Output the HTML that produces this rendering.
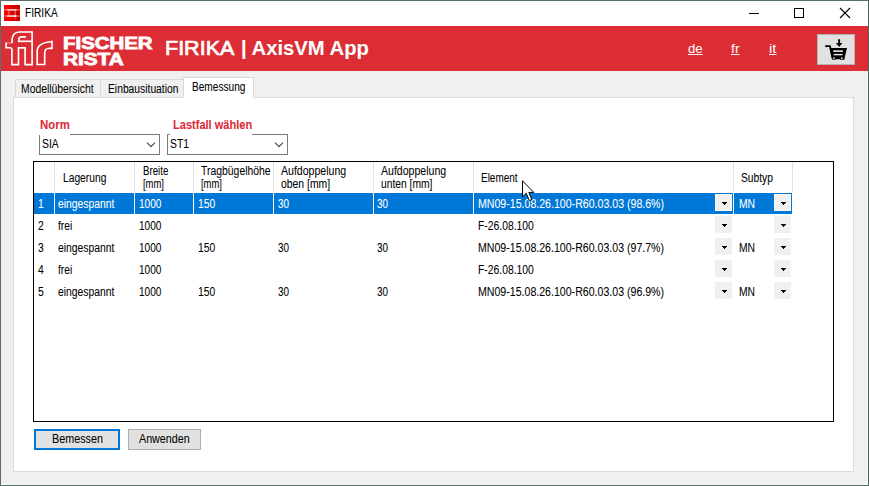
<!DOCTYPE html>
<html><head><meta charset="utf-8">
<style>
*{box-sizing:border-box;margin:0;padding:0}
html,body{width:869px;height:486px;overflow:hidden;background:#f0f0f0;font-family:"Liberation Sans",sans-serif;font-size:11px;color:#000}
.abs{position:absolute}
.t{position:absolute;white-space:nowrap;transform-origin:0 0;-webkit-text-stroke:.06px currentColor}
#win{position:absolute;left:0;top:0;width:869px;height:486px;background:#f0f0f0;overflow:hidden}
#bT{left:0;top:0;width:869px;height:1px;background:#5a7168}
#bL{left:0;top:0;width:1px;height:486px;background:#5a7168}
#bR{left:868px;top:0;width:1px;height:486px;background:#4c645b}
#bRW{left:867px;top:71px;width:1px;height:414px;background:#f9f9f9}
#bB{left:0;top:485px;width:869px;height:1px;background:#566d65}
#bW{left:1px;top:484px;width:867px;height:1px;background:#fafafa}
#title{left:1px;top:1px;width:867px;height:25px;background:#fff}
#banner{left:1px;top:26px;width:867px;height:45px;background:#dc2d35}
.tab{position:absolute;border:1px solid #d9d9d9;border-bottom:none;background:#f0f0f0}
#panel{left:13px;top:97px;width:841px;height:375px;background:#fff;border:1px solid #dcdcdc}
.combo{position:absolute;height:21px;border:1px solid #7a7a7a;background:#fff}
.lbl{position:absolute;background:#fff}
#grid{left:33px;top:161px;width:801px;height:261px;border:1px solid #000;background:#fff}
.hd{position:absolute;top:162px;width:1px;height:31px;background:#e2e2e2}
.sel{position:absolute;left:34px;top:193px;width:758px;height:21px;background:#0078d7}
.vd{position:absolute;top:193px;width:1px;height:21px;background:#fff}
.dd{position:absolute;width:17px;height:17px;background:linear-gradient(#000,#000) 7px 8px/5px 1px no-repeat,linear-gradient(#000,#000) 8px 9px/3px 1px no-repeat,linear-gradient(#000,#000) 9px 10px/1px 1px no-repeat,#f0f0f0}
.dds{box-shadow:inset 0 0 0 1px #fcf7f1}
.btn{position:absolute;height:21px;background:#e1e1e1;border:1px solid #adadad}
</style></head><body>
<div id="win">
<div class="abs" id="title"></div>
<div class="abs" id="banner"></div>

<svg class="abs" style="left:4px;top:5px" width="16" height="16" viewBox="0 0 16 16">
<defs><linearGradient id="g" x1="0" x2="1" y1="0" y2="0"><stop offset="0" stop-color="#ff0000"/><stop offset="1" stop-color="#c40000"/></linearGradient></defs>
<rect width="16" height="16" fill="url(#g)"/>
<rect x="0" y="4.2" width="16" height="1.3" fill="#fff" opacity=".4"/>
<rect x="0" y="10.4" width="16" height="1.3" fill="#fff" opacity=".4"/>
<rect x="3" y="4.2" width="9.6" height="1.3" fill="#fff" opacity=".8"/>
<rect x="3" y="10.4" width="9.6" height="1.3" fill="#fff" opacity=".85"/>
<rect x="4.3" y="5.4" width="1.2" height="5" fill="#fff" opacity=".4"/>
<rect x="10.6" y="5.4" width="1.2" height="5" fill="#fff" opacity=".4"/>
<rect x="10.3" y="10.3" width="1.5" height="1.6" fill="#fff"/>
<rect x="10.5" y="13" width="1.2" height=".8" fill="#fff" opacity=".6"/>
</svg>
<div class="t" style="left:25.30px;top:6.00px;font-size:12px;line-height:14px;transform:scale(0.8440,1.000);">FIRIKA</div>
<svg class="abs" style="left:740px;top:1px" width="128" height="25" viewBox="740 1 128 25" shape-rendering="crispEdges">
<rect x="749" y="13" width="10" height="1" fill="#000"/>
<rect x="794.5" y="8.5" width="9" height="9" fill="none" stroke="#000" stroke-width="1"/>
<g shape-rendering="auto" stroke="#000" stroke-width="1.1"><line x1="840" y1="8" x2="850" y2="18"/><line x1="850" y1="8" x2="840" y2="18"/></g>
</svg>
<svg class="abs" style="left:0;top:26px" width="60" height="45" viewBox="0 26 60 45" fill="none" stroke="#fff" stroke-width="1.65" stroke-linejoin="miter">
<path d="M6.1 42.6 V47.7 H10.6 L11.9 49 V64.6 H18.5 V47.9 H25.1 V64.6 H32.1 V32 H19.2 C14.6 32 12.1 35.4 12.1 39.6 V42.9"/>
<path d="M6.1 42.9 H12.1" opacity=".35"/>
<path d="M18.7 41.3 V40.2 C18.7 38.2 19.8 36.9 21.8 36.9 H25.9"/>
<path d="M18 41.3 H32"/>
<path d="M37.2 64.5 V51 C37.2 45.6 42.5 42.4 52 41.5 V48.3 H49.2 C46.2 48.4 44.7 50 44.7 53 V64.5 Z"/>
</svg>
<div class="t" style="left:62.90px;top:34.90px;font-size:16px;line-height:17px;font-weight:bold;color:#fff;transform:scale(1.2754,1.000);-webkit-text-stroke:.8px #fff;">FISCHER</div>
<div class="t" style="left:62.90px;top:51.30px;font-size:16px;line-height:17px;font-weight:bold;color:#fff;transform:scale(1.2971,1.000);-webkit-text-stroke:.8px #fff;">RISTA</div>
<div class="t" style="left:165.40px;top:36.50px;font-size:20px;line-height:22px;color:#fff;transform:scale(1.0760,1.000);-webkit-text-stroke:.7px #fff;">FIRIKA</div>
<div class="t" style="left:241.20px;top:36.50px;font-size:20px;line-height:22px;font-weight:bold;color:#fff;transform:scale(1.0129,1.000);">| AxisVM App</div>
<div class="t" style="left:688.00px;top:41.00px;font-size:13px;line-height:15px;color:#fff;transform:scale(1.0069,1.000);text-decoration:underline;-webkit-text-stroke:0;">de</div>
<div class="t" style="left:731.20px;top:41.00px;font-size:13px;line-height:15px;color:#fff;transform:scale(1.0750,1.000);text-decoration:underline;-webkit-text-stroke:0;">fr</div>
<div class="t" style="left:769.00px;top:41.00px;font-size:13px;line-height:15px;color:#fff;transform:scale(1.1538,1.000);text-decoration:underline;-webkit-text-stroke:0;">it</div>
<div class="abs" style="left:817px;top:34px;width:38px;height:31px;background:#e1e1e1;border:1px solid #b4b4b4"></div>
<svg class="abs" style="left:817px;top:34px" width="38" height="31" viewBox="817 34 38 31">
<path d="M838.2 39.2 H840.1 V43.1 H842.4 L839.15 47 L835.9 43.1 H838.2 Z" fill="#000"/>
<path d="M829.5 47.9 H847 L844.7 57.4 V58.5 A1.3 1.3 0 0 1 843.4 59.8 H840.6 L839.8 59.2 H836 L835.2 59.8 H833 A1.3 1.3 0 0 1 831.7 58.5 Z" fill="#000"/>
<path d="M825.6 46.2 H830 L832.4 57" fill="none" stroke="#000" stroke-width="1.7"/>
<path d="M824.8 46.2 L826.6 45 V47.4 Z" fill="#000"/>
<rect x="833.2" y="50.3" width="9.7" height="1.6" fill="#e6e6e6"/>
<rect x="833.6" y="53.9" width="8.9" height="1.4" fill="#e6e6e6"/>
<circle cx="834" cy="58.2" r=".85" fill="#e6e6e6"/><circle cx="841.8" cy="58.2" r=".85" fill="#e6e6e6"/>
</svg>
<div class="abs" id="panel"></div>
<div class="tab" style="left:15px;top:79px;width:86px;height:18px"></div>
<div class="tab" style="left:100px;top:79px;width:84px;height:18px"></div>
<div class="tab" style="left:183px;top:77px;width:71px;height:21px;background:#fff"></div>
<div class="t" style="left:21.30px;top:82.00px;font-size:12px;line-height:14px;transform:scale(0.8643,1.000);">Modellübersicht</div>
<div class="t" style="left:107.60px;top:82.00px;font-size:12px;line-height:14px;transform:scale(0.8585,1.000);">Einbausituation</div>
<div class="t" style="left:191.50px;top:80.00px;font-size:12px;line-height:14px;transform:scale(0.8426,1.000);">Bemessung</div>
<div class="combo" style="left:39px;top:134px;width:121px"></div>
<div class="combo" style="left:167px;top:134px;width:121px"></div>
<div class="lbl" style="left:36px;top:119px;width:34px;height:16px"></div>
<div class="lbl" style="left:170px;top:119px;width:82px;height:16px"></div>
<div class="t" style="left:39.80px;top:118.00px;font-size:12px;line-height:14px;font-weight:bold;color:#dc2b3a;transform:scale(0.9498,1.000);">Norm</div>
<div class="t" style="left:172.60px;top:118.00px;font-size:12px;line-height:14px;font-weight:bold;color:#dc2b3a;transform:scale(0.9209,1.000);">Lastfall wählen</div>
<div class="t" style="left:42.30px;top:136.50px;font-size:12px;line-height:14px;transform:scale(0.8620,1.000);">SIA</div>
<div class="t" style="left:170.40px;top:136.50px;font-size:12px;line-height:14px;transform:scale(0.8620,1.000);">ST1</div>
<svg class="abs" style="left:146px;top:141px" width="10" height="7" viewBox="0 0 10 7" fill="none" stroke="#444" stroke-width="1.1"><path d="M1 1.7 L5 5.7 L9 1.7"/></svg>
<svg class="abs" style="left:274.3px;top:141px" width="10" height="7" viewBox="0 0 10 7" fill="none" stroke="#444" stroke-width="1.1"><path d="M1 1.7 L5 5.7 L9 1.7"/></svg>
<div class="abs" id="grid"></div>
<div class="hd" style="left:54px"></div>
<div class="hd" style="left:134px"></div>
<div class="hd" style="left:193px"></div>
<div class="hd" style="left:273px"></div>
<div class="hd" style="left:373px"></div>
<div class="hd" style="left:473px"></div>
<div class="hd" style="left:733px"></div>
<div class="hd" style="left:792px"></div>
<div class="t" style="left:62.70px;top:171.00px;font-size:12px;line-height:14px;transform:scale(0.8552,1.000);">Lagerung</div>
<div class="t" style="left:142.70px;top:164.00px;font-size:12px;line-height:14px;transform:scale(0.8064,1.000);">Breite</div>
<div class="t" style="left:142.70px;top:177.00px;font-size:12px;line-height:14px;transform:scale(0.7850,1.000);">[mm]</div>
<div class="t" style="left:201.40px;top:164.00px;font-size:12px;line-height:14px;transform:scale(0.8673,1.000);">Tragbügelhöhe</div>
<div class="t" style="left:201.40px;top:177.00px;font-size:12px;line-height:14px;transform:scale(0.7850,1.000);">[mm]</div>
<div class="t" style="left:281.10px;top:164.00px;font-size:12px;line-height:14px;transform:scale(0.8796,1.000);">Aufdoppelung</div>
<div class="t" style="left:281.10px;top:177.00px;font-size:12px;line-height:14px;transform:scale(0.8670,1.000);">oben [mm]</div>
<div class="t" style="left:380.70px;top:164.00px;font-size:12px;line-height:14px;transform:scale(0.8796,1.000);">Aufdoppelung</div>
<div class="t" style="left:380.70px;top:177.00px;font-size:12px;line-height:14px;transform:scale(0.8567,1.000);">unten [mm]</div>
<div class="t" style="left:481.20px;top:171.00px;font-size:12px;line-height:14px;transform:scale(0.8295,1.000);">Element</div>
<div class="t" style="left:741.20px;top:171.00px;font-size:12px;line-height:14px;transform:scale(0.8530,1.000);">Subtyp</div>
<div class="sel"></div>
<div class="vd" style="left:54px"></div>
<div class="vd" style="left:134px"></div>
<div class="vd" style="left:193px"></div>
<div class="vd" style="left:273px"></div>
<div class="vd" style="left:373px"></div>
<div class="vd" style="left:473px"></div>
<div class="vd" style="left:733px"></div>
<div class="t" style="left:37.90px;top:196.50px;font-size:12px;line-height:14px;color:#fff;transform:scale(0.8620,1.000);">1</div>
<div class="t" style="left:57.80px;top:196.50px;font-size:12px;line-height:14px;color:#fff;transform:scale(0.8627,1.000);">eingespannt</div>
<div class="t" style="left:138.80px;top:196.50px;font-size:12px;line-height:14px;color:#fff;transform:scale(0.8411,1.000);">1000</div>
<div class="t" style="left:198.20px;top:196.50px;font-size:12px;line-height:14px;color:#fff;transform:scale(0.8600,1.000);">150</div>
<div class="t" style="left:277.90px;top:196.50px;font-size:12px;line-height:14px;color:#fff;transform:scale(0.8299,1.000);">30</div>
<div class="t" style="left:377.30px;top:196.50px;font-size:12px;line-height:14px;color:#fff;transform:scale(0.8299,1.000);">30</div>
<div class="t" style="left:477.90px;top:196.50px;font-size:12px;line-height:14px;color:#fff;transform:scale(0.8826,1.000);">MN09-15.08.26.100-R60.03.03 (98.6%)</div>
<div class="t" style="left:738.50px;top:196.50px;font-size:12px;line-height:14px;color:#fff;transform:scale(0.8620,1.000);">MN</div>
<div class="dd dds" style="left:715px;top:194px"></div><div class="dd dds" style="left:774px;top:194px"></div>
<div class="t" style="left:37.90px;top:218.50px;font-size:12px;line-height:14px;transform:scale(0.8620,1.000);">2</div>
<div class="t" style="left:57.80px;top:218.50px;font-size:12px;line-height:14px;transform:scale(0.8602,1.000);">frei</div>
<div class="t" style="left:138.80px;top:218.50px;font-size:12px;line-height:14px;transform:scale(0.8411,1.000);">1000</div>
<div class="t" style="left:477.90px;top:218.50px;font-size:12px;line-height:14px;transform:scale(0.8620,1.000);">F-26.08.100</div>
<div class="dd" style="left:715px;top:216px"></div><div class="dd" style="left:774px;top:216px"></div>
<div class="t" style="left:37.90px;top:240.50px;font-size:12px;line-height:14px;transform:scale(0.8620,1.000);">3</div>
<div class="t" style="left:57.80px;top:240.50px;font-size:12px;line-height:14px;transform:scale(0.8627,1.000);">eingespannt</div>
<div class="t" style="left:138.80px;top:240.50px;font-size:12px;line-height:14px;transform:scale(0.8411,1.000);">1000</div>
<div class="t" style="left:198.20px;top:240.50px;font-size:12px;line-height:14px;transform:scale(0.8600,1.000);">150</div>
<div class="t" style="left:277.90px;top:240.50px;font-size:12px;line-height:14px;transform:scale(0.8299,1.000);">30</div>
<div class="t" style="left:377.30px;top:240.50px;font-size:12px;line-height:14px;transform:scale(0.8299,1.000);">30</div>
<div class="t" style="left:477.90px;top:240.50px;font-size:12px;line-height:14px;transform:scale(0.8826,1.000);">MN09-15.08.26.100-R60.03.03 (97.7%)</div>
<div class="t" style="left:738.50px;top:240.50px;font-size:12px;line-height:14px;transform:scale(0.8620,1.000);">MN</div>
<div class="dd" style="left:715px;top:238px"></div><div class="dd" style="left:774px;top:238px"></div>
<div class="t" style="left:37.90px;top:262.50px;font-size:12px;line-height:14px;transform:scale(0.8620,1.000);">4</div>
<div class="t" style="left:57.80px;top:262.50px;font-size:12px;line-height:14px;transform:scale(0.8602,1.000);">frei</div>
<div class="t" style="left:138.80px;top:262.50px;font-size:12px;line-height:14px;transform:scale(0.8411,1.000);">1000</div>
<div class="t" style="left:477.90px;top:262.50px;font-size:12px;line-height:14px;transform:scale(0.8620,1.000);">F-26.08.100</div>
<div class="dd" style="left:715px;top:260px"></div><div class="dd" style="left:774px;top:260px"></div>
<div class="t" style="left:37.90px;top:284.50px;font-size:12px;line-height:14px;transform:scale(0.8620,1.000);">5</div>
<div class="t" style="left:57.80px;top:284.50px;font-size:12px;line-height:14px;transform:scale(0.8627,1.000);">eingespannt</div>
<div class="t" style="left:138.80px;top:284.50px;font-size:12px;line-height:14px;transform:scale(0.8411,1.000);">1000</div>
<div class="t" style="left:198.20px;top:284.50px;font-size:12px;line-height:14px;transform:scale(0.8600,1.000);">150</div>
<div class="t" style="left:277.90px;top:284.50px;font-size:12px;line-height:14px;transform:scale(0.8299,1.000);">30</div>
<div class="t" style="left:377.30px;top:284.50px;font-size:12px;line-height:14px;transform:scale(0.8299,1.000);">30</div>
<div class="t" style="left:477.90px;top:284.50px;font-size:12px;line-height:14px;transform:scale(0.8826,1.000);">MN09-15.08.26.100-R60.03.03 (96.9%)</div>
<div class="t" style="left:738.50px;top:284.50px;font-size:12px;line-height:14px;transform:scale(0.8620,1.000);">MN</div>
<div class="dd" style="left:715px;top:282px"></div><div class="dd" style="left:774px;top:282px"></div>
<div class="btn" style="left:34px;top:429px;width:86px;border:2px solid #0078d7"></div>
<div class="btn" style="left:128px;top:429px;width:73px"></div>
<div class="t" style="left:52.30px;top:431.50px;font-size:12px;line-height:14px;transform:scale(0.8987,1.000);">Bemessen</div>
<div class="t" style="left:138.70px;top:431.50px;font-size:12px;line-height:14px;transform:scale(0.8934,1.000);">Anwenden</div>
<svg class="abs" style="left:521px;top:179px" width="15" height="24" viewBox="-1 -1 15 24"><path d="M0.5 0.8 V16.8 L4.2 13.3 L7.4 20.6 L9.9 19.5 L6.8 12.4 H11.8 Z" fill="#fff" stroke="#000" stroke-width="1"/></svg>
<div class="abs" id="bW"></div><div class="abs" id="bRW"></div>
<div class="abs" id="bT"></div><div class="abs" id="bL"></div><div class="abs" id="bR"></div><div class="abs" id="bB"></div>
</div>
</body></html>
